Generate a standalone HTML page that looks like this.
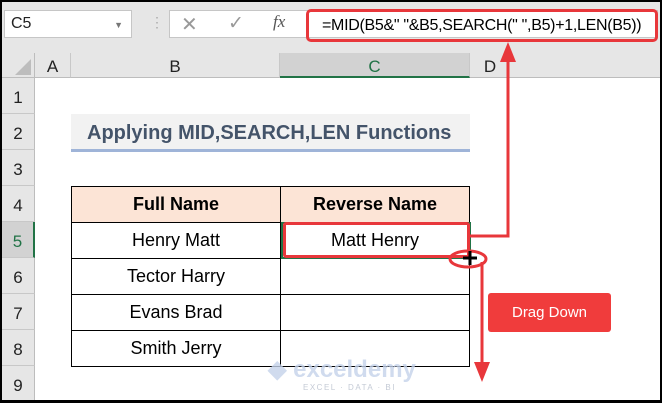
<!DOCTYPE html>
<html><head><meta charset="utf-8"><style>
*{margin:0;padding:0;box-sizing:border-box}
body{width:662px;height:403px;background:#fff;position:relative;overflow:hidden;font-family:"Liberation Sans",sans-serif}
.a{position:absolute}
.rh{position:absolute;left:2px;width:33px;height:36px;background:#e6e6e6;border-bottom:1px solid #c8c8c8;border-right:1px solid #bdbdbd;font-size:17px;color:#222;text-align:center;line-height:40px}
.ch{position:absolute;top:53px;height:25px;background:#e6e6e6;border-right:1px solid #c8c8c8;border-bottom:1px solid #bdbdbd;font-size:17px;color:#222;text-align:center;line-height:27px}
.c{position:absolute;border:1px solid #000;font-size:18px;text-align:center;line-height:35px;color:#000}
</style></head><body>
<div class="a" style="left:0;top:0;width:662px;height:53px;background:#e6e6e6"></div>
<div class="a" style="left:4px;top:10px;width:128px;height:28px;background:#fff;border:1px solid #c6c6c6;font-size:16px;line-height:26px;padding-left:6px;color:#222">C5<span style="position:absolute;right:8px;top:1px;font-size:9px;color:#777">▼</span></div>
<div class="a" style="left:150px;top:14px;color:#aaa;font-size:14px">⋮</div>
<div class="a" style="left:169px;top:10px;width:489px;height:28px;background:#fff;border:1px solid #c6c6c6"></div>
<div class="a" style="left:181px;top:12px;color:#999;font-size:20px">✕</div>
<div class="a" style="left:228px;top:12px;color:#999;font-size:19px">✓</div>
<div class="a" style="left:273px;top:12px;color:#555;font-size:17px;font-style:italic;font-family:'Liberation Serif',serif">fx</div>
<div class="a" style="left:306px;top:9px;width:352px;height:33px;border:3px solid #e8373b;border-radius:5px;font-size:16px;line-height:27px;padding-left:13px;color:#000;white-space:nowrap;letter-spacing:-0.3px">=MID(B5&amp;" "&amp;B5,SEARCH(" ",B5)+1,LEN(B5))</div>

<div class="a" style="left:2px;top:53px;width:33px;height:25px;background:#e6e6e6;border-right:1px solid #bdbdbd;border-bottom:1px solid #bdbdbd"></div>
<svg class="a" style="left:14px;top:58px" width="18" height="18"><polygon points="17,1 17,17 1,17" fill="#bdbdbd"/></svg>
<div class="ch" style="left:35px;width:36px">A</div>
<div class="ch" style="left:71px;width:209px">B</div>
<div class="ch" style="left:280px;width:190px;background:#d2d2d2;border-bottom:2px solid #217346;color:#217346">C</div>
<div class="ch" style="left:470px;width:40px;border-right:none">D</div>
<div class="ch" style="left:510px;width:150px;border-right:none"></div>

<div class="rh" style="top:78px">1</div>
<div class="rh" style="top:114px">2</div>
<div class="rh" style="top:150px">3</div>
<div class="rh" style="top:186px">4</div>
<div class="rh" style="top:222px;background:#d2d2d2;border-right:2px solid #217346;color:#217346">5</div>
<div class="rh" style="top:258px">6</div>
<div class="rh" style="top:294px">7</div>
<div class="rh" style="top:330px">8</div>
<div class="rh" style="top:366px">9</div>

<div class="a" style="left:71px;top:114px;width:399px;height:38px;background:#f2f2f2;border-bottom:3px solid #9fb4d8;font-size:20px;font-weight:bold;color:#44546a;line-height:38px;padding-left:16px;white-space:nowrap">Applying MID,SEARCH,LEN Functions</div>

<div class="c" style="left:71px;top:186px;width:210px;height:37px;background:#fce4d6;font-weight:bold">Full Name</div>
<div class="c" style="left:280px;top:186px;width:190px;height:37px;background:#fce4d6;font-weight:bold">Reverse Name</div>
<div class="c" style="left:71px;top:222px;width:210px;height:37px">Henry Matt</div>
<div class="c" style="left:280px;top:222px;width:190px;height:37px">Matt Henry</div>
<div class="c" style="left:71px;top:258px;width:210px;height:37px">Tector Harry</div>
<div class="c" style="left:280px;top:258px;width:190px;height:37px"></div>
<div class="c" style="left:71px;top:294px;width:210px;height:37px">Evans Brad</div>
<div class="c" style="left:280px;top:294px;width:190px;height:37px"></div>
<div class="c" style="left:71px;top:330px;width:210px;height:37px">Smith Jerry</div>
<div class="c" style="left:280px;top:330px;width:190px;height:37px"></div>

<div class="a" style="left:281px;top:222px;width:190px;height:37px;border:2px solid #217346"></div>
<div class="a" style="left:283px;top:222px;width:187px;height:36px;border:3px solid #e8373b;border-radius:3px"></div>

<div class="a" style="left:268px;top:355px;font-size:24px;font-weight:bold;color:#c5d3ea;opacity:.8">&#9670; exceldemy</div>
<div class="a" style="left:303px;top:383px;font-size:8px;color:#c5cbd6;letter-spacing:1.5px">EXCEL · DATA · BI</div>

<svg class="a" style="left:0;top:0" width="662" height="403">
<g stroke="#e8373b" stroke-width="3" fill="none">
<polyline points="470,236 508,236 508,56"/>
<line x1="482" y1="262" x2="482" y2="368"/>
<ellipse cx="468" cy="259" rx="18" ry="8"/>
</g>
<polygon points="500,62 508,42 516,62" fill="#e8373b"/>
<polygon points="474,362 482,382 490,362" fill="#e8373b"/>
<path d="M463 258h14M470 251v14" stroke="#000" stroke-width="3"/>
</svg>

<div class="a" style="left:488px;top:293px;width:123px;height:39px;background:#f03c3c;border-radius:3px;color:#fff;font-size:15px;text-align:center;line-height:39px">Drag Down</div>

<div class="a" style="left:0;top:0;width:662px;height:403px;border:2px solid #000;border-bottom-width:3px"></div>
</body></html>
